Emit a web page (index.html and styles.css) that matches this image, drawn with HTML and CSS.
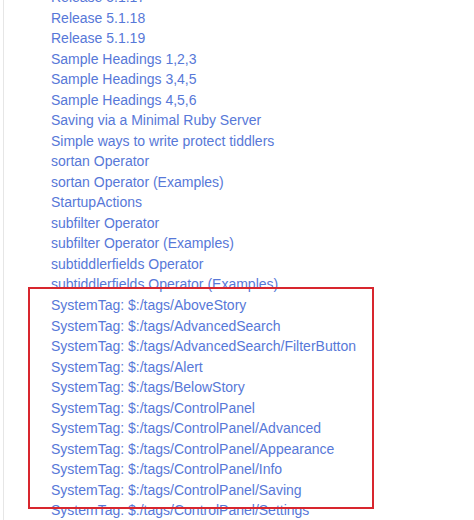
FILE: index.html
```html
<!DOCTYPE html>
<html>
<head>
<meta charset="utf-8">
<link rel="stylesheet" href="styles.css">
</head>
<body>
<div class="frame">
  <ul class="list">
    <li><a>Release 5.1.17</a></li>
    <li><a>Release 5.1.18</a></li>
    <li><a>Release 5.1.19</a></li>
    <li><a>Sample Headings 1,2,3</a></li>
    <li><a>Sample Headings 3,4,5</a></li>
    <li><a>Sample Headings 4,5,6</a></li>
    <li><a>Saving via a Minimal Ruby Server</a></li>
    <li><a>Simple ways to write protect tiddlers</a></li>
    <li><a>sortan Operator</a></li>
    <li><a>sortan Operator (Examples)</a></li>
    <li><a>StartupActions</a></li>
    <li><a>subfilter Operator</a></li>
    <li><a>subfilter Operator (Examples)</a></li>
    <li><a>subtiddlerfields Operator</a></li>
    <li><a>subtiddlerfields Operator (Examples)</a></li>
    <li><a>SystemTag: $:/tags/AboveStory</a></li>
    <li><a>SystemTag: $:/tags/AdvancedSearch</a></li>
    <li><a>SystemTag: $:/tags/AdvancedSearch/FilterButton</a></li>
    <li><a>SystemTag: $:/tags/Alert</a></li>
    <li><a>SystemTag: $:/tags/BelowStory</a></li>
    <li><a>SystemTag: $:/tags/ControlPanel</a></li>
    <li><a>SystemTag: $:/tags/ControlPanel/Advanced</a></li>
    <li><a>SystemTag: $:/tags/ControlPanel/Appearance</a></li>
    <li><a>SystemTag: $:/tags/ControlPanel/Info</a></li>
    <li><a>SystemTag: $:/tags/ControlPanel/Saving</a></li>
    <li><a>SystemTag: $:/tags/ControlPanel/Settings</a></li>
  </ul>
  <div class="highlight"></div>
</div>
</body>
</html>
```

FILE: styles.css
```css
html, body {
  margin: 0;
  padding: 0;
  background: #ffffff;
  overflow: hidden;
}
body {
  width: 474px;
  height: 520px;
  font-family: "Liberation Sans", Arial, sans-serif;
}
.frame {
  position: relative;
  margin-left: 3px;
  height: 520px;
  border-left: 1px solid #e6e6e6;
  overflow: hidden;
}
.list {
  list-style: none;
  margin: -13px 0 0 0;
  padding: 0 0 0 47px;
  font-size: 14px;
  line-height: 20.53px;
}
.list a {
  color: #5778d8;
  text-decoration: none;
  white-space: nowrap;
}
.highlight {
  position: absolute;
  left: 24px;
  top: 287px;
  width: 342px;
  height: 218px;
  border: 2px solid #d8262e;
}
```
